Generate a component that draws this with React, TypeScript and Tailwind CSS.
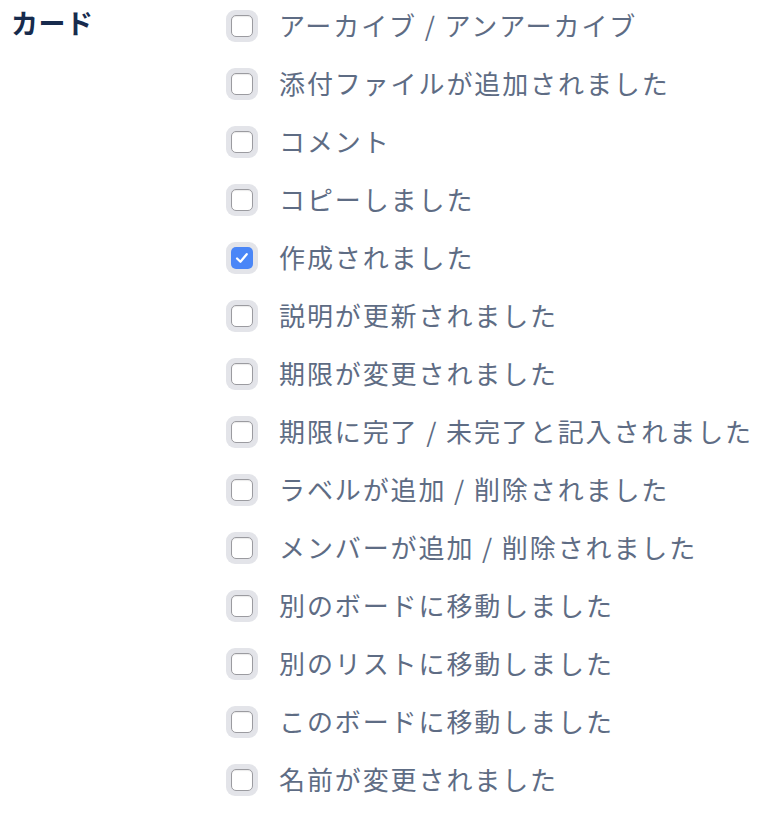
import React from "react";

const items: { label: string; checked?: boolean }[] = [
  { label: "アーカイブ / アンアーカイブ" },
  { label: "添付ファイルが追加されました" },
  { label: "コメント" },
  { label: "コピーしました" },
  { label: "作成されました", checked: true },
  { label: "説明が更新されました" },
  { label: "期限が変更されました" },
  { label: "期限に完了 / 未完了と記入されました" },
  { label: "ラベルが追加 / 削除されました" },
  { label: "メンバーが追加 / 削除されました" },
  { label: "別のボードに移動しました" },
  { label: "別のリストに移動しました" },
  { label: "このボードに移動しました" },
  { label: "名前が変更されました" },
];

function Check({ checked }: { checked?: boolean }) {
  return (
    <div className="w-[32px] h-[32px] rounded-[9px] bg-[#e3e4e9] flex items-center justify-center shrink-0">
      {checked ? (
        <div className="w-[22px] h-[22px] rounded-[5px] bg-[#4a86f7] flex items-center justify-center">
          <svg width="18" height="18" viewBox="0 0 16 16">
            <path d="M3.6 8.4 L6.6 11.3 L12.2 4.6" fill="none" stroke="white" strokeWidth="2" strokeLinecap="round" strokeLinejoin="round" />
          </svg>
        </div>
      ) : (
        <div className="w-[22px] h-[22px] rounded-[5px] bg-white border border-[#9b9ba0] shadow-[inset_0_1px_1px_rgba(0,0,0,0.08)]" />
      )}
    </div>
  );
}

export default function App() {
  return (
    <div
      className="w-[774px] h-[816px] bg-white flex"
      style={{ fontFamily: '"Noto Sans CJK JP", "Noto Sans", sans-serif' }}
    >
      <div className="w-[226px] pl-[11px] pt-[6px] shrink-0">
        <div className="text-[27px] font-bold leading-[34px] tracking-[0.5px] text-[#172b4d]">カード</div>
      </div>
      <div className="flex flex-col gap-[26px] pt-[10px]">
        {items.map((it) => (
          <div key={it.label} className="flex items-center h-[32px]">
            <Check checked={it.checked} />
            <span className="ml-[21px] pb-[3px] text-[26px] leading-[32px] tracking-[1.9px] text-[#5e6c84] whitespace-nowrap">
              {it.label}
            </span>
          </div>
        ))}
      </div>
    </div>
  );
}
